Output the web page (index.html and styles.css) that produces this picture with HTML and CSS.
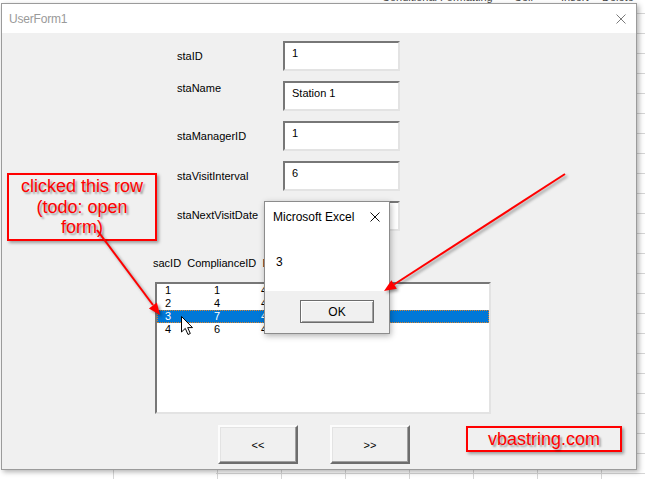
FILE: index.html
```html
<!DOCTYPE html>
<html lang="en">
<head>
    <meta charset="UTF-8">
    <title>UserForm1</title>
    <link rel="stylesheet" href="styles.css">
</head>
<body>
    <div class="ribbon">
        <span class="rb-cf">Conditional Formatting</span>
        <span class="rb-cell">Cell</span>
        <span class="rb-ins">Insert</span>
        <span>Delete</span>
    </div>

    <div class="window">
        <div class="titlebar">
            <span class="title">UserForm1</span>
            <svg class="close" width="10" height="10" viewBox="0 0 10 10"><path d="M0.5 0.5L9.5 9.5M9.5 0.5L0.5 9.5" stroke="#7a7a7a" stroke-width="1" fill="none"/></svg>
        </div>

        <div class="form-body">
            <div class="fields">
                <label class="lbl">staID</label><div class="textbox">1</div>
                <label class="lbl lbl-top">staName</label><div class="textbox">Station 1</div>
                <label class="lbl">staManagerID</label><div class="textbox">1</div>
                <label class="lbl">staVisitInterval</label><div class="textbox">6</div>
                <label class="lbl lbl-last">staNextVisitDate</label><div class="textbox"></div>
            </div>

            <div class="list-header">sacID&nbsp; ComplianceID&nbsp; D</div>

            <div class="listbox">
                <div class="row"><span>1</span><span>1</span><span>4/10/2019</span></div>
                <div class="row"><span>2</span><span>4</span><span>4/12/2019</span></div>
                <div class="row selected"><span>3</span><span>7</span><span>4/15/2019</span></div>
                <div class="row"><span>4</span><span>6</span><span>4/17/2019</span></div>
            </div>

            <div class="nav">
                <button class="btn">&lt;&lt;</button>
                <button class="btn">&gt;&gt;</button>
            </div>
        </div>
    </div>

    <div class="msgbox">
        <div class="mb-title">
            <span>Microsoft Excel</span>
            <svg class="mb-close" width="10" height="10" viewBox="0 0 10 10"><path d="M0.5 0.5L9.5 9.5M9.5 0.5L0.5 9.5" stroke="#111" stroke-width="1" fill="none"/></svg>
        </div>
        <div class="mb-text">3</div>
        <div class="mb-footer"><button class="ok">OK</button></div>
    </div>

    <div class="callout">clicked this row<br>(todo: open<br>form)</div>
    <div class="brand">vbastring.com</div>

    <svg class="cursor" width="13" height="20" viewBox="0 0 13 20">
        <path d="M0.5 0.5L0.5 16L4.3 12.4L7 18.5L9.3 17.5L6.7 11.6L11.5 11.6Z" fill="#fff" stroke="#000" stroke-width="1" stroke-linejoin="round"/>
    </svg>

    <svg class="arrows" width="645" height="479" viewBox="0 0 645 479">
        <line x1="97" y1="230" x2="153" y2="305" stroke="#ff0000" stroke-width="2"/>
        <polygon points="160,315 148.9,308.4 156.9,302.4" fill="#ff0000"/>
        <line x1="565" y1="174" x2="394" y2="284.5" stroke="#ff0000" stroke-width="2"/>
        <polygon points="384,291 391.4,280.3 396.8,288.7" fill="#ff0000"/>
    </svg>
</body>
</html>
```

FILE: styles.css
```css
html, body { margin: 0; padding: 0; }
body { width: 645px; height: 479px; overflow: hidden; position: relative; font-family: 'Liberation Sans', Arial, sans-serif; color: #000;
    background-color: #fff;
    background-image:
        linear-gradient(#d6d6d6, #d6d6d6),
        linear-gradient(#fff, #fff),
        linear-gradient(to right, #d6d6d6 1px, transparent 1px),
        linear-gradient(to bottom, #d6d6d6 1px, transparent 1px);
    background-size: 1px 100%, 216px 100%, 64px 20px, 64px 20px;
    background-position: 113px 0, 0 0, 25px 13px, 25px 13px;
    background-repeat: no-repeat, no-repeat, repeat, repeat; }

.ribbon { height: 3px; overflow: hidden; background: #fff; display: flex; padding-left: 382px; font-size: 11px; line-height: 12px; color: #444; }
.ribbon span { margin-top: -9px; white-space: nowrap; overflow: hidden; }
.rb-cf { width: 132px; }
.rb-cell { width: 47px; }
.rb-ins { width: 41px; }

.window { margin-left: 1px; width: 636px; height: 467px; box-sizing: border-box; border: 1px solid #9b9b9b; box-shadow: 2px 2px 5px rgba(0,0,0,0.3); background: #f0f0f0; }
.titlebar { height: 29px; background: #fff; display: flex; align-items: center; padding: 0 10px 0 7px; }
.title { font-size: 12px; color: #9a9a9a; letter-spacing: -0.2px; }
.close { margin-left: auto; }

.form-body { height: 436px; padding-top: 8px; box-sizing: border-box; font-size: 11px; }
.fields { display: grid; grid-template-columns: 106px 117px; grid-auto-rows: 30px; row-gap: 10px; margin-left: 175px; }
.lbl { line-height: 13px; padding-top: 9px; white-space: nowrap; }
.lbl-top { padding-top: 1px; }
.lbl-last { padding-top: 8px; }
.textbox { background: #fff; box-sizing: border-box; border-top: 2px solid #777; border-left: 2px solid #777; border-right: 2px solid #e3e3e3; border-bottom: 2px solid #e3e3e3; padding: 4px 0 0 7px; line-height: 13px; }

.list-header { margin: 26px 0 0 151px; line-height: 13px; white-space: nowrap; }
.listbox { margin: 12px 0 0 153px; width: 336px; height: 132px; box-sizing: border-box; background: #fff; border-top: 2px solid #777; border-left: 2px solid #777; border-right: 2px solid #e3e3e3; border-bottom: 2px solid #e3e3e3; }
.row { display: grid; grid-template-columns: 49px 47px 1fr; height: 13px; line-height: 13px; padding-left: 8px; }
.row.selected { background: #0078d7; color: #fff; outline: 1px dotted #d9822b; outline-offset: -1px; }

.nav { display: flex; gap: 32px; margin: 11px 0 0 216px; }
.btn { width: 80px; height: 39px; background: #f0f0f0; font-family: 'Liberation Sans', Arial, sans-serif; font-size: 11px; color: #000; padding: 0; border-top: 2px solid #fcfcfc; border-left: 2px solid #fcfcfc; border-right: 2px solid #6d6d6d; border-bottom: 2px solid #6d6d6d; box-shadow: inset -1px -1px #a0a0a0, inset 1px 1px #e3e3e3; }

.msgbox { position: absolute; left: 264px; top: 201px; width: 126px; height: 133px; box-sizing: border-box; border: 1px solid #8c8c8c; background: #fff; box-shadow: 1px 2px 6px rgba(0,0,0,0.3); display: flex; flex-direction: column; font-size: 12px; }
.mb-title { height: 30px; display: flex; align-items: center; padding: 0 9px 0 8px; }
.mb-close { margin-left: auto; }
.mb-text { height: 59px; box-sizing: border-box; padding: 23px 0 0 11px; line-height: 14px; }
.mb-footer { flex: 1; background: #f0f0f0; padding: 9px 0 0 35px; }
.ok { width: 74px; height: 23px; padding: 0; background: #f0f0f0; font-family: 'Liberation Sans', Arial, sans-serif; font-size: 12px; color: #000; border: 1px solid #6d6d6d; box-shadow: inset 1px 1px #fff, inset -1px -1px #a0a0a0; }

.callout { position: absolute; left: 7px; top: 173px; width: 150px; height: 68px; box-sizing: border-box; border: 2px solid #ff0000; box-shadow: 2px 2px 3px rgba(0,0,0,0.35); padding-top: 1px; text-align: center; color: #ff0000; font-size: 18px; line-height: 20.5px; text-shadow: 2px 2px 2px rgba(0,0,0,0.35); }
.brand { position: absolute; left: 466px; top: 426px; width: 156px; height: 26px; box-sizing: border-box; border: 2px solid #ff0000; box-shadow: 2px 2px 3px rgba(0,0,0,0.35); text-align: center; color: #ff0000; font-size: 18px; line-height: 22px; text-shadow: 2px 2px 2px rgba(0,0,0,0.35); }

.cursor { position: absolute; left: 181px; top: 316px; }
.arrows { position: absolute; left: 0; top: 0; pointer-events: none; filter: drop-shadow(2px 2px 1.5px rgba(0,0,0,0.4)); }
```
